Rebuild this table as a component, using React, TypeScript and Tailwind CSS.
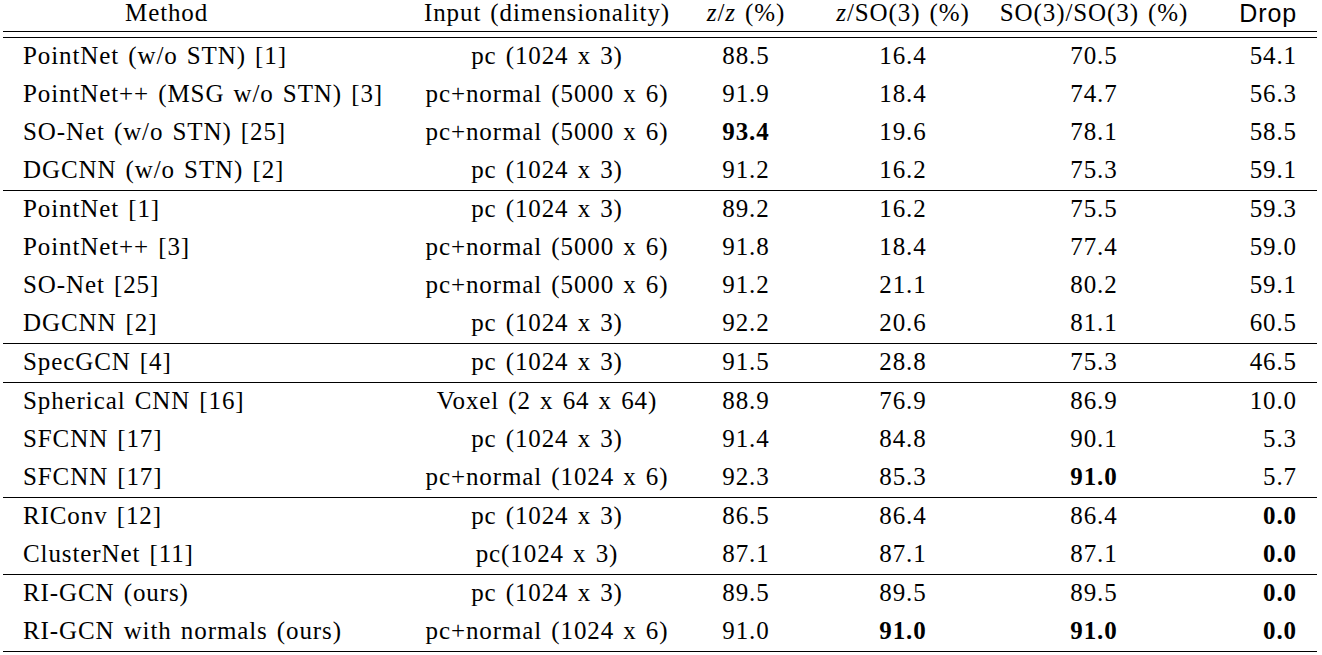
const cols = [
  "w-[417px] pl-[20px] text-left",
  "w-[254px] text-center",
  "w-[144px] text-center",
  "w-[170px] text-center",
  "w-[212px] text-center",
  "w-[117px] pr-[20px] text-right",
];

type Cell = string | { v: string; b: true };

const groups: Cell[][][] = [
  [
    ["PointNet (w/o STN) [1]", "pc (1024 x 3)", "88.5", "16.4", "70.5", "54.1"],
    ["PointNet++ (MSG w/o STN) [3]", "pc+normal (5000 x 6)", "91.9", "18.4", "74.7", "56.3"],
    ["SO-Net (w/o STN) [25]", "pc+normal (5000 x 6)", { v: "93.4", b: true }, "19.6", "78.1", "58.5"],
    ["DGCNN (w/o STN) [2]", "pc (1024 x 3)", "91.2", "16.2", "75.3", "59.1"],
  ],
  [
    ["PointNet [1]", "pc (1024 x 3)", "89.2", "16.2", "75.5", "59.3"],
    ["PointNet++ [3]", "pc+normal (5000 x 6)", "91.8", "18.4", "77.4", "59.0"],
    ["SO-Net [25]", "pc+normal (5000 x 6)", "91.2", "21.1", "80.2", "59.1"],
    ["DGCNN [2]", "pc (1024 x 3)", "92.2", "20.6", "81.1", "60.5"],
  ],
  [["SpecGCN [4]", "pc (1024 x 3)", "91.5", "28.8", "75.3", "46.5"]],
  [
    ["Spherical CNN [16]", "Voxel (2 x 64 x 64)", "88.9", "76.9", "86.9", "10.0"],
    ["SFCNN [17]", "pc (1024 x 3)", "91.4", "84.8", "90.1", "5.3"],
    ["SFCNN [17]", "pc+normal (1024 x 6)", "92.3", "85.3", { v: "91.0", b: true }, "5.7"],
  ],
  [
    ["RIConv [12]", "pc (1024 x 3)", "86.5", "86.4", "86.4", { v: "0.0", b: true }],
    ["ClusterNet [11]", "pc(1024 x 3)", "87.1", "87.1", "87.1", { v: "0.0", b: true }],
  ],
  [
    ["RI-GCN (ours)", "pc (1024 x 3)", "89.5", "89.5", "89.5", { v: "0.0", b: true }],
    ["RI-GCN with normals (ours)", "pc+normal (1024 x 6)", "91.0", { v: "91.0", b: true }, { v: "91.0", b: true }, { v: "0.0", b: true }],
  ],
];

function Row({ cells }: { cells: Cell[] }) {
  return (
    <div className="flex h-[38px] items-center pb-[2px]">
      {cells.map((c, i) => (
        <div key={i} className={cols[i]}>
          {typeof c === "string" ? c : <span className="font-bold">{c.v}</span>}
        </div>
      ))}
    </div>
  );
}

export default function App() {
  return (
    <div className="w-[1322px] h-[655px] bg-white text-black overflow-hidden">
      <div className="ml-[3px] w-[1314px] text-[25px] leading-[28px] tracking-[0.9px] [word-spacing:2px] font-['Liberation_Serif',serif]">
        <div className="flex h-[31px] items-center pb-[6px]">
          <div className="w-[417px] pl-[122px] text-left">Method</div>
          <div className="w-[254px] text-center">Input (dimensionality)</div>
          <div className="w-[144px] text-center">
            <i>z</i>/<i>z</i> (%)
          </div>
          <div className="w-[170px] text-center">
            <i>z</i>/SO(3) (%)
          </div>
          <div className="w-[212px] text-center">SO(3)/SO(3) (%)</div>
          <div className="w-[117px] pr-[20px] text-right font-['Liberation_Sans',sans-serif]">
            Drop
          </div>
        </div>
        <div className="h-px bg-black" />
        <div className="h-[5px]" />
        <div className="h-px bg-black" />
        {groups.map((g, gi) => (
          <div key={gi} className="border-b border-black">
            {g.map((r, ri) => (
              <Row key={ri} cells={r} />
            ))}
          </div>
        ))}
      </div>
    </div>
  );
}
